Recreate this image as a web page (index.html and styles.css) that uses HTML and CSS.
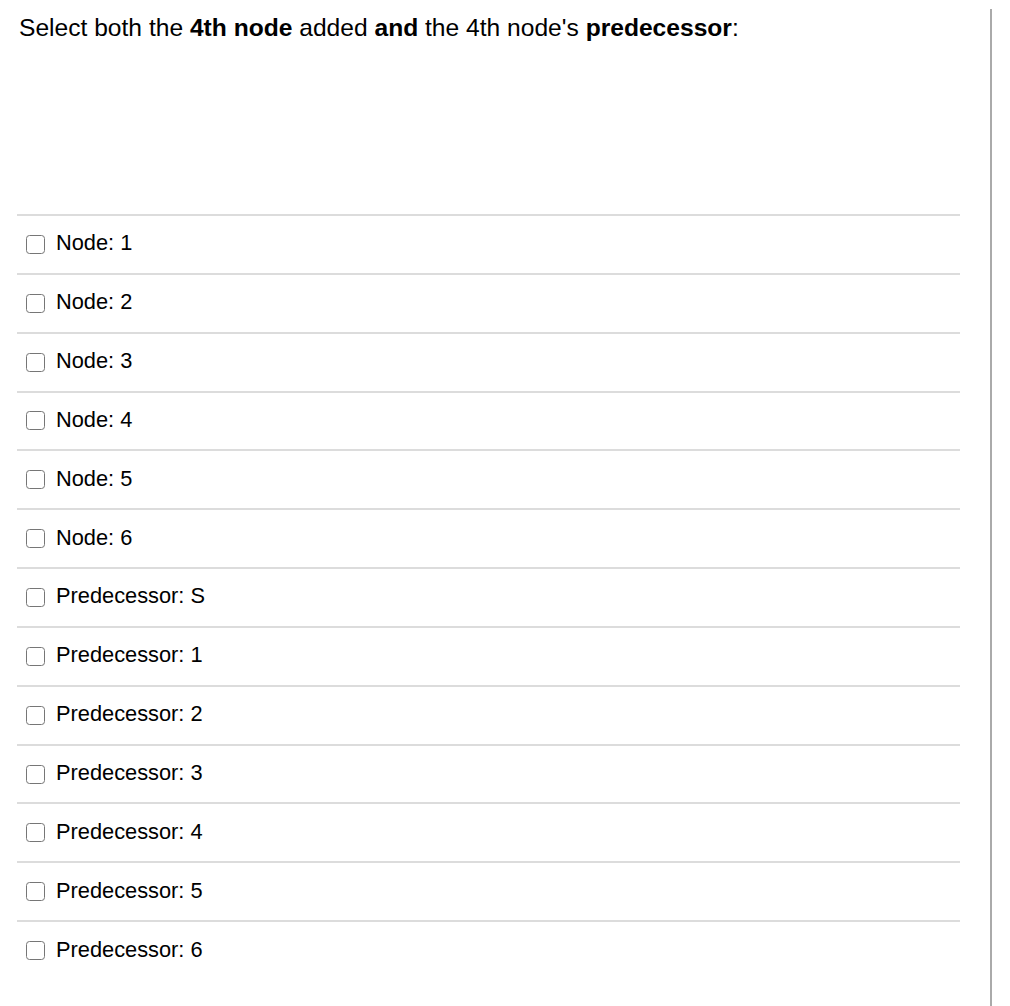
FILE: index.html
```html
<!DOCTYPE html>
<html>
<head>
<meta charset="utf-8">
<link rel="stylesheet" href="styles.css">
</head>
<body>
<div class="page">
  <div class="content">
    <p class="prompt">Select both the <b>4th node</b> added <b>and</b> the 4th node's <b>predecessor</b>:</p>
    <ul class="options">
      <li class="option"><span class="box"></span><span class="label">Node: 1</span></li>
      <li class="option"><span class="box"></span><span class="label">Node: 2</span></li>
      <li class="option"><span class="box"></span><span class="label">Node: 3</span></li>
      <li class="option"><span class="box"></span><span class="label">Node: 4</span></li>
      <li class="option"><span class="box"></span><span class="label">Node: 5</span></li>
      <li class="option"><span class="box"></span><span class="label">Node: 6</span></li>
      <li class="option"><span class="box"></span><span class="label">Predecessor: S</span></li>
      <li class="option"><span class="box"></span><span class="label">Predecessor: 1</span></li>
      <li class="option"><span class="box"></span><span class="label">Predecessor: 2</span></li>
      <li class="option"><span class="box"></span><span class="label">Predecessor: 3</span></li>
      <li class="option"><span class="box"></span><span class="label">Predecessor: 4</span></li>
      <li class="option"><span class="box"></span><span class="label">Predecessor: 5</span></li>
      <li class="option"><span class="box"></span><span class="label">Predecessor: 6</span></li>
    </ul>
  </div>
</div>
</body>
</html>
```
FILE: styles.css
```css
html, body {
  margin: 0;
  padding: 0;
  background: #fff;
  height: 100%;
  overflow: hidden;
}
body {
  font-family: "Liberation Sans", Arial, sans-serif;
  color: #000;
}
.page {
  margin-top: 9px;
  width: 992px;
  height: calc(100vh - 9px);
  box-sizing: border-box;
  border-right: 2px solid #aaa;
}
.content {
  width: 943px;
  margin-left: 17px;
}
.prompt {
  margin: 0;
  padding-left: 2px;
  padding-top: 5px;
  font-size: 24.6px;
  line-height: 28px;
  height: 200px;
}
.options {
  list-style: none;
  margin: 0;
  padding: 0;
}
.option {
  display: flex;
  align-items: center;
  height: 56.85px;
  border-top: 2px solid #dcdcdc;
  padding-left: 9px;
  font-size: 21.8px;
}
.box {
  width: 19px;
  height: 19px;
  box-sizing: border-box;
  border: 1.5px solid #767676;
  border-radius: 3.5px;
  background: #fff;
  flex: none;
}
.label {
  margin-left: 11px;
  padding-bottom: 2px;
}
```
